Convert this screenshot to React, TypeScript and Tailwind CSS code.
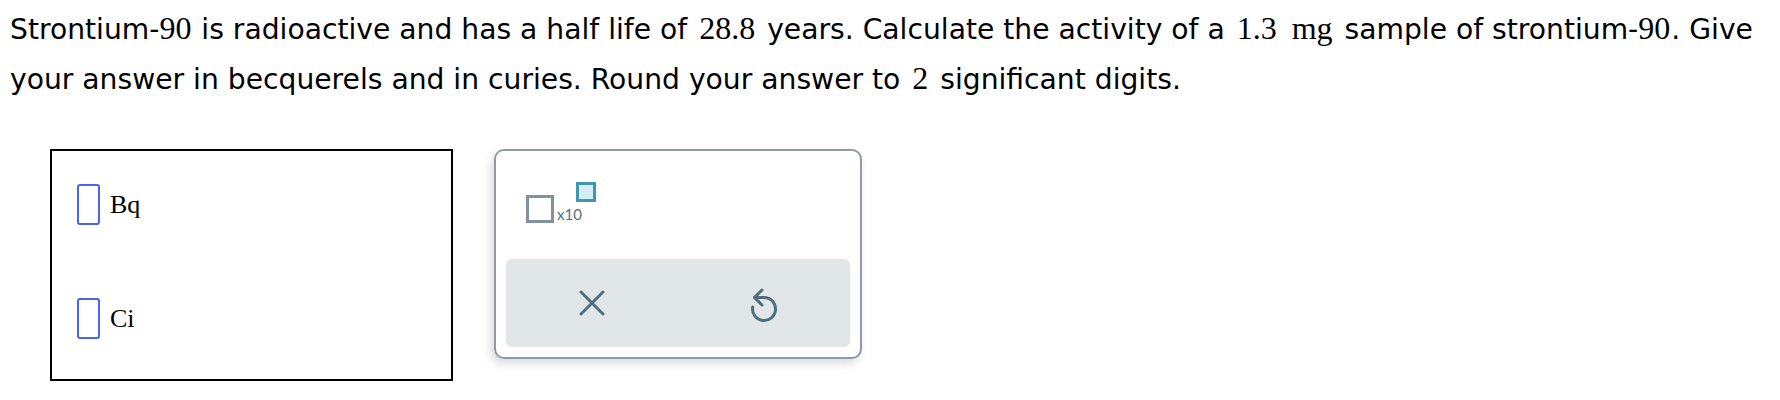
import React from 'react';

const serif = { fontFamily: '"Liberation Serif", "Times New Roman", serif' };

const M: React.FC<{ children: React.ReactNode; tight?: boolean }> = ({ children, tight }) => (
  <span className={`${tight ? 'mr-[1px]' : 'mx-[3px]'} text-[32px] font-['Liberation_Serif',serif]`}>
    {children}
  </span>
);

const UnitInput: React.FC<{ unit: string }> = ({ unit }) => (
  <div className="flex items-center gap-[10px]">
    <div className="w-[23px] h-[41px] border-2 border-[#4a63f5] rounded-[3px]" />
    <span className="text-[26px] text-black leading-none" style={serif}>
      {unit}
    </span>
  </div>
);

export default function App() {
  return (
    <div className="bg-white min-h-[400px] pl-[10px] pt-[4px] font-['DejaVu_Sans',Verdana,sans-serif] text-black">
      <p className="text-[28.2px] leading-[48px] whitespace-nowrap">
        Strontium-<M tight>90</M> is radioactive and has a half life of <M>28.8</M> years. Calculate the
        activity of a <M>1.3</M> <M>mg</M> sample of strontium-<M tight>90</M>. Give
        <br />
        your answer in becquerels and in curies. Round your answer to <M>2</M> significant digits.
      </p>

      <div className="mt-[45px] ml-[40px] flex items-start gap-[41px]">
        {/* unit answers */}
        <div className="w-[403px] h-[232px] border-2 border-black pl-[25px] pt-[33px] flex flex-col gap-[73px]">
          <UnitInput unit="Bq" />
          <UnitInput unit="Ci" />
        </div>

        {/* scientific notation keypad */}
        <div className="w-[368px] h-[210px] border-2 border-[#8b9ea6] rounded-[10px] bg-white shadow-[-3px_5px_10px_rgba(0,0,0,0.14)] flex flex-col">
          <div className="pl-[30px] pt-[31px] h-[108px]">
            <div className="flex items-end h-[41px]">
              <div className="w-[28px] h-[28px] border-[3px] border-[#7e939b]" />
              <span className="ml-[3px] mb-[1px] text-[15px] leading-none text-[#56707a] font-['Lato','Open_Sans',sans-serif]">
                x10
              </span>
              <div className="self-start ml-[-6px] w-[20px] h-[20px] border-[3px] border-[#3e96b1] bg-[#d6eef5]" />
            </div>
          </div>
          <div className="mx-[10px] h-[88px] bg-[#e1e6e9] rounded-[6px] flex">
            <button className="flex-1 flex items-center justify-center">
              <svg width="26" height="26" viewBox="0 0 26 26" fill="none" stroke="#4f6f7a" strokeWidth="3" strokeLinecap="round">
                <path d="M2 2 L24 24 M24 2 L2 24" />
              </svg>
            </button>
            <button className="flex-1 flex items-center justify-center">
              <svg width="30" height="36" viewBox="0 0 30 36" fill="none" stroke="#4f6f7a" strokeWidth="3" strokeLinecap="round" strokeLinejoin="round" className="mt-[4px]">
                <path d="M5.5 10.5 H15 A11.5 11.5 0 1 1 3.7 20" />
                <path d="M13 3 L5.5 10.5 L13 18" />
              </svg>
            </button>
          </div>
        </div>
      </div>
    </div>
  );
}
